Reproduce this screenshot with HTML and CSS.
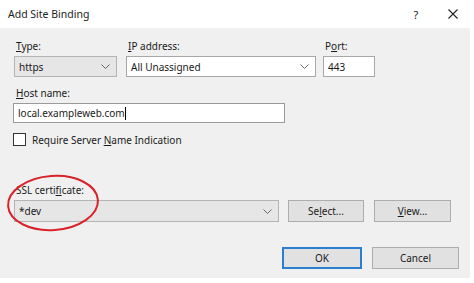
FILE: index.html
```html
<!DOCTYPE html>
<html lang="en">
<head>
  <meta charset="UTF-8" />
  <title>Add Site Binding</title>
  <link rel="stylesheet" href="styles.css">
</head>
<body>
  <div class="dialog">
    <div class="titlebar">
      <span class="title">Add Site Binding</span>
      <span class="help">?</span>
      <span class="close">
        <svg width="10" height="10" viewBox="0 0 10 10"><path d="M0.5 0.5 L9.5 9.5 M9.5 0.5 L0.5 9.5" stroke="#222" stroke-width="1.1" fill="none"/></svg>
      </span>
    </div>

    <div class="content">
      <div class="row-top">
        <div class="field f-type">
          <label><u>T</u>ype:</label>
          <div class="combo gray"><span>https</span><svg class="chev" width="9" height="5" viewBox="0 0 9 5"><path d="M0.5 0.5 L4.5 4.5 L8.5 0.5" stroke="#666" fill="none"/></svg></div>
        </div>
        <div class="field f-ip">
          <label><u>I</u>P address:</label>
          <div class="combo"><span>All Unassigned</span><svg class="chev" width="9" height="5" viewBox="0 0 9 5"><path d="M0.5 0.5 L4.5 4.5 L8.5 0.5" stroke="#666" fill="none"/></svg></div>
        </div>
        <div class="field f-port">
          <label>P<u>o</u>rt:</label>
          <div class="textbox">443</div>
        </div>
      </div>

      <div class="field f-host">
        <label><u>H</u>ost name:</label>
        <div class="textbox host">local.exampleweb.com<span class="caret"></span></div>
      </div>

      <div class="check-row">
        <span class="checkbox"></span>
        <span>Require Server <u>N</u>ame Indication</span>
      </div>

      <div class="field f-ssl">
        <label>SSL certi<u>f</u>icate:</label>
        <div class="ssl-row">
          <div class="combo gray ssl"><span>*dev</span><svg class="chev" width="9" height="5" viewBox="0 0 9 5"><path d="M0.5 0.5 L4.5 4.5 L8.5 0.5" stroke="#666" fill="none"/></svg></div>
          <button class="btn b-select">Se<u>l</u>ect...</button>
          <button class="btn b-view"><u>V</u>iew...</button>
        </div>
      </div>

      <div class="actions">
        <button class="btn b-ok">OK</button>
        <button class="btn b-cancel">Cancel</button>
      </div>

      <svg class="mark" width="100" height="66" viewBox="0 0 100 66">
        <ellipse cx="50" cy="33" rx="45" ry="27" transform="rotate(-4 50 33)" stroke="#d8232a" stroke-width="2" fill="none"/>
      </svg>
    </div>
  </div>
</body>
</html>
```

FILE: styles.css
```css
body {
  margin: 0;
  background: #fff;
  font-family: "Noto Sans", "Open Sans", sans-serif;
  font-size: 10px;
  color: #1a1a1a;
}

.dialog {
  width: 470px;
  height: 278px;
  background: #f0f0f0;
}

.titlebar {
  height: 28px;
  background: #fff;
  display: flex;
  align-items: center;
  padding: 0 8px;
  font-size: 10.5px;
}

.title {
  flex: 1;
  color: #222;
}

.help {
  width: 20px;
  margin-right: 22px;
  text-align: center;
  font-size: 11px;
}

.close {
  display: flex;
  flex-shrink: 0;
  margin-right: 4px;
}

.content {
  position: relative;
  padding: 10px 11px 0 14px;
}

label {
  display: block;
  height: 18px;
  line-height: 16px;
  padding-left: 2px;
}

u {
  text-decoration-thickness: 1px;
  text-underline-offset: 1px;
}

.row-top {
  display: flex;
}

.f-type { width: 103px; margin-right: 9px; }
.f-ip { width: 190px; margin-right: 7px; }
.f-port { width: 52px; }

.combo, .textbox {
  box-sizing: border-box;
  height: 21px;
  border: 1px solid #a8a8a8;
  background: #fff;
  display: flex;
  align-items: center;
  padding: 0 4px;
}

.combo span {
  flex: 1;
}

.combo.gray {
  background: #e6e6e6;
  border-color: #b4b4b4;
}

.chev {
  margin-right: 2px;
}

.f-host {
  margin-top: 8px;
}

.textbox.host {
  width: 272px;
  height: 20px;
  margin-left: -1px;
  border-color: #9a9a9a;
}

.caret {
  width: 1px;
  height: 13px;
  background: #000;
}

.check-row {
  display: flex;
  align-items: center;
  gap: 6px;
  margin-top: 10px;
  margin-left: -1px;
  height: 13px;
}

.checkbox {
  box-sizing: border-box;
  width: 13px;
  height: 13px;
  border: 1px solid #333;
  background: #fff;
}

.f-ssl {
  margin-top: 36px;
}

.ssl-row {
  display: flex;
}

.combo.ssl {
  width: 265px;
  height: 22px;
}

.btn {
  box-sizing: border-box;
  height: 22px;
  border: 1px solid #adadad;
  background: #e1e1e1;
  font-family: inherit;
  font-size: 10px;
  color: #1a1a1a;
  padding: 0;
}

.b-select { width: 76px; margin-left: 9px; }
.b-view { width: 77px; margin-left: 10px; }

.actions {
  display: flex;
  justify-content: flex-end;
  gap: 10px;
  margin-top: 25px;
}

.b-ok {
  width: 80px;
  border: 2px solid #2b7fd0;
}

.b-cancel {
  width: 87px;
}

.mark {
  position: absolute;
  left: 3px;
  top: 142px;
}
```
